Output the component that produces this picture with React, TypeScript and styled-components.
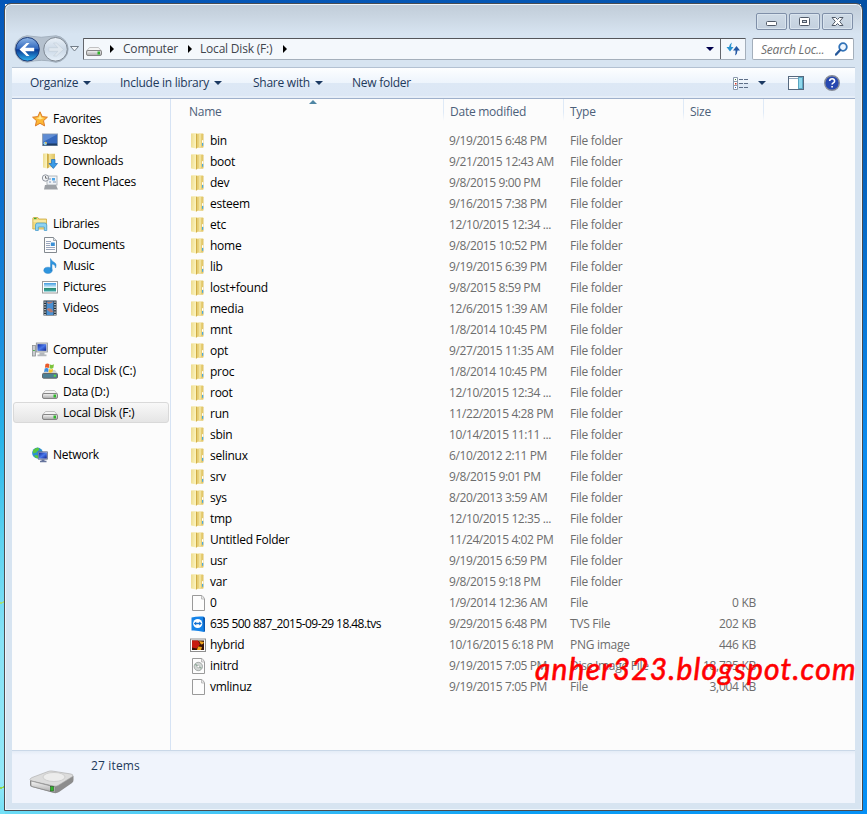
import React from 'react';
import styled, { createGlobalStyle, css } from 'styled-components';

const Global = createGlobalStyle`
  *{box-sizing:border-box}
  html,body{margin:0;padding:0;overflow:hidden}
  body{font-family:"Open Sans","Noto Sans",sans-serif;font-size:12px;color:#000;}
`;

const Desktop = styled.div`
  position:relative;width:867px;height:814px;padding:3px 4px 3px 4px;overflow:hidden;
  background:
    linear-gradient(90deg,#0456b8,#0557b4 60%,#0450a4) 0 0/867px 4px no-repeat,
    linear-gradient(180deg,#0450a4 0,#0667c4 200px,#0b8cf0 450px,#0590f6 814px) 100% 0/6px 814px no-repeat,
    linear-gradient(170deg,transparent 45%,#8fd84a 45%,#8fd84a 65%,transparent 65%) 0 783px/5px 8px no-repeat,
    linear-gradient(170deg,transparent 45%,#a4e07a 45%,#a4e07a 65%,transparent 65%) 0 598px/5px 8px no-repeat,
    linear-gradient(180deg,#0456b8 0,#0a6fce 200px,#1a90e0 340px,#28b4ea 440px,#5cd2f0 540px,#86e2f6 640px,#92e8f8 780px,#74e0f6 814px) 0 0/5px 814px no-repeat,
    linear-gradient(90deg,#6cdcf5,#45c6f6 25%,#0ba0f5 60%,#0590f6) 0 100%/867px 5px no-repeat;
`;
const Window = styled.div`
  display:flex;flex-direction:column;width:859px;height:808px;padding:0 7px 7px 7px;
  border:1px solid #4a4d52;border-radius:7px 7px 0 0;
  box-shadow:inset 0 0 0 1px #eef5fb;
  background:linear-gradient(180deg,#c0ccd8 0,#c9d5e1 12px,#d7e4f1 30px,#d7e4f1 100%);
`;
const TitleBar = styled.div`
  display:flex;justify-content:flex-end;gap:2px;height:34px;padding:9px 2px 0 0;flex:none;
`;
const Caption = styled.div`
  width:31px;height:17px;border:1px solid #7f8fa8;border-radius:2px;display:flex;align-items:center;justify-content:center;
  background:linear-gradient(#cedae6,#c3d0de);box-shadow:inset 0 0 0 1px #d9e4ee;
`;
const NavBar = styled.div`display:flex;height:29px;flex:none;`;
const NavButtons = styled.div`width:71px;height:29px;flex:none;svg{display:block;}`;
const Address = styled.div`
  display:flex;align-items:center;width:663px;height:22px;border:1px solid #a4afbb;border-top-color:#54565b;border-left-color:#63666c;
  border-radius:1px;background:#f4f8fc;color:#3f454d;margin-right:6px;flex:none;
  svg,i{flex:none;}
`;
const Crumb = styled.span<{ $w: number }>`width:${p => p.$w}px;line-height:20px;letter-spacing:-.2px;white-space:nowrap;`;
const Tri = styled.i<{ $l: number; $r: number }>`
  width:0;height:0;border:4px solid transparent;border-left:4px solid #000;border-right:0;
  margin-left:${p => p.$l}px;margin-right:${p => p.$r}px;
`;
const Down = styled.i<{ $c?: string; $l?: string }>`
  display:inline-block;width:0;height:0;border:4px solid transparent;border-top:4px solid ${p => p.$c || '#1c3a63'};border-bottom:0;margin-left:${p => p.$l || 0};
`;
const Refresh = styled.div`
  display:flex;align-items:center;justify-content:center;width:25px;height:20px;border-left:1px solid #63666c;margin-left:6px;flex:none;
`;
const Search = styled.div`
  display:flex;align-items:center;justify-content:space-between;width:102px;height:22px;border:1px solid #a4afbb;border-top-color:#6c7078;border-radius:2px;
  background:#fff;padding:0 5px 0 8px;color:#6d6d6d;font-style:italic;letter-spacing:-.2px;flex:none;
`;
const Client = styled.div`display:flex;flex-direction:column;flex:1;min-height:0;width:843px;`;
const Toolbar = styled.div`
  display:flex;align-items:center;height:32px;flex:none;border-top:1px solid #b3c1d2;border-bottom:1px solid #9fb0cb;
  background:linear-gradient(#fdfeff 0,#edf4fc 15px,#dde8f5 15px,#dce7f5 28px,#e6eef8 28px);color:#1e395b;padding-left:18px;
`;
const Tool = styled.div<{ $w: number }>`display:flex;align-items:center;gap:5px;width:${p => p.$w}px;letter-spacing:-.25px;white-space:nowrap;`;
const Label = styled.span`padding-bottom:1px;`;
const Body = styled.div`display:flex;height:651px;flex:none;background:#fcfcfc;`;
const Side = styled.div`width:159px;flex:none;border-right:1px solid #d6e3f4;padding:9px 1px 0;`;
const Gap = styled.div`height:21px;`;
const SideRow = styled.div<{ $child?: boolean; $sel?: boolean }>`
  display:flex;align-items:center;height:21px;padding-left:${p => (p.$child ? 28 : 18)}px;gap:5px;letter-spacing:-.27px;white-space:nowrap;
  border:1px solid transparent;
  ${p => p.$sel && css`border-color:#d9d9d9;border-radius:3px;background:linear-gradient(#f8f8f8,#e5e5e5);`}
  svg{flex:none;}
`;
const List = styled.div`width:684px;flex:none;`;
const Cells = css`display:grid;grid-template-columns:273px 120px 120px 80px;`;
const Head = styled.div`${Cells} position:relative;height:31px;color:#4c607a;`;
const HeadCell = styled.div<{ $first?: boolean }>`
  height:26px;line-height:25px;padding-left:${p => (p.$first ? 18 : 6)}px;letter-spacing:-.25px;
  background:linear-gradient(#dfeaf7,#dfeaf7 60%,#fcfcfc) 100% 0/1px 22px no-repeat;
`;
const SortMark = styled.div`position:absolute;left:138px;top:1px;width:0;height:0;border:4px solid transparent;border-top:0;border-bottom:4px solid #4f86a4;`;
const Row = styled.div`${Cells} height:21px;line-height:21px;white-space:nowrap;color:#6d6d6d;`;
const NameCell = styled.div<{ $tight?: boolean }>`display:flex;align-items:center;gap:3px;padding-left:20px;color:#000;letter-spacing:${p => (p.$tight ? -.56 : -.26)}px;svg{flex:none;}`;
const Cell = styled.div<{ $right?: boolean; $date?: boolean }>`padding-left:${p => (p.$date ? 5 : 6)}px;text-align:${p => (p.$right ? 'right' : 'left')};padding-right:${p => (p.$right ? 8 : 0)}px;letter-spacing:${p => (p.$date ? -.4 : -.28)}px;`;
const Details = styled.div`
  display:flex;flex:none;height:53px;border-top:1px solid #cad8e8;background:linear-gradient(#e4ecf6,#f0f4fc 4px);
  color:#1e395b;padding-left:17px;gap:17px;
`;
const Count = styled.div`padding-top:6px;line-height:17px;letter-spacing:.15px;`;
const Watermark = styled.div`
  position:absolute;left:535px;top:646px;font:italic 400 30px/44px Lato,"Open Sans",sans-serif;color:#f00;white-space:nowrap;letter-spacing:1.18px;-webkit-text-stroke:.6px #f00;
`;

const Defs = () => (
  <svg width="0" height="0" style={{ position: 'absolute' }}>
    <defs>
      <linearGradient id="back" x1="0" x2="1"><stop offset="0" stopColor="#f4e8a4" /><stop offset=".5" stopColor="#f3e398" /><stop offset="1" stopColor="#dfc262" /></linearGradient>
      <linearGradient id="flap" x1="0" x2="1" y1="0" y2=".2"><stop offset="0" stopColor="#ecda8c" /><stop offset="1" stopColor="#fbf3bc" /></linearGradient>
      <linearGradient id="blue" x1="0" x2="0" y1="0" y2="1"><stop offset="0" stopColor="#8fb6e6" /><stop offset=".48" stopColor="#2f66bd" /><stop offset=".52" stopColor="#0a3a94" /><stop offset="1" stopColor="#2fb4f0" /></linearGradient>
      <linearGradient id="pale" x1="0" x2="0" y1="0" y2="1"><stop offset="0" stopColor="#eaf1f8" /><stop offset=".5" stopColor="#cbd8e6" /><stop offset="1" stopColor="#e8f1fa" /></linearGradient>
      <linearGradient id="screen" x1="0" x2="1" y1="0" y2="1"><stop offset="0" stopColor="#10289c" /><stop offset=".5" stopColor="#4a78ea" /><stop offset="1" stopColor="#0a1f8c" /></linearGradient>
      <linearGradient id="metal" x1="0" x2="0" y1="0" y2="1"><stop offset="0" stopColor="#f6f6f6" /><stop offset="1" stopColor="#a9a9a9" /></linearGradient>
      <linearGradient id="sky" x1="0" x2="0" y1="0" y2="1"><stop offset="0" stopColor="#3f9be0" /><stop offset=".55" stopColor="#e4f7fb" /><stop offset=".6" stopColor="#2c8a6a" /><stop offset="1" stopColor="#3faab0" /></linearGradient>
    </defs>
  </svg>
);

const DiskShape = () => (
  <g>
    <path d="M3.500 6.500h9L15.500 10H.500z" fill="#f4f4f4" stroke="#b4b4b4" strokeWidth=".8" />
    <rect x=".5" y="9.500" width="15" height="5" rx="1.500" fill="url(#metal)" stroke="#858585" />
    <rect x="11.500" y="10.500" width="2.500" height="3" fill="#2fb52a" />
  </g>
);

const sheet = (
  <g>
    <path d="M1.500.5h9.500L13.500 3.500v12h-12z" fill="#fdfdfd" stroke="#9a9a9a" />
    <path d="M10.500.5v3.500h3" fill="#e8e8e8" stroke="#b0b0b0" strokeWidth=".8" />
  </g>
);

const art: Record<string, React.ReactNode> = {
  folder: (
    <g>
      <path d="M0 .5h11.700q.8 0 .8.8V14q0 .8-.8.8H6L0 14.300z" fill="url(#back)" />
      <path d="M0 .8l5-.3v15L0 14.200z" fill="url(#flap)" />
      <path d="M5 .5l1.500.8v13.200l-1.200 1.200-.3-.2z" fill="#d0ae46" />
      <path d="M6.500 1.300l2-.6v13l-2 1z" fill="#ead27a" />
      <path d="M8.500.7h1v13.200h-1z" fill="#faf1ba" />
      <rect x="11" y="9.800" width="1.200" height="3" fill="#4aa8e0" /><rect x="11" y="7.200" width="1.200" height="2.600" fill="#fff" />
    </g>
  ),
  star: <g><path d="M8 .8l2.200 4.800 5.200.6-3.900 3.500 1.100 5.200L8 12.300l-4.600 2.600 1.100-5.200L.6 6.200l5.200-.6z" fill="#fcb834" stroke="#dd7b26" strokeWidth="1" /><path d="M8 3l1.200 3.500L12 7l-4 1.500L4 7l2.800-.5z" fill="#ffe894" /></g>,
  desktop: <g><rect x=".5" y="2" width="15" height="11.500" fill="#3568bd" stroke="#8fa0b5" /><path d="M1 2.500h14L1 10z" fill="#7aa5e2" opacity=".6" /><rect x="1" y="11.500" width="14" height="2" fill="#1d3c66" /><circle cx="3.200" cy="11.500" r="1.800" fill="#8ed0f0" /><path d="M3.200 9.700a1.800 1.800 0 011.800 1.800H3.200z" fill="#f2b53c" /></g>,
  downloads: <g><path d="M1 .8h12v13.500H6L1 14z" fill="url(#back)" /><path d="M1 .8l4-.3v15l-4-1z" fill="url(#flap)" /><path d="M5 .5l1.800.8v13.500L5 15.500z" fill="#d0ae46" /><path d="M9.500 6.500h3.500v4h2.500l-4.200 5-4.300-5h2.500z" fill="#3a9be6" stroke="#1c69b8" strokeWidth=".7" /></g>,
  recent: <g><rect x="5" y="2" width="10" height="9" fill="#f0f3f6" stroke="#a1a8ae" strokeWidth=".8" /><path d="M3 11h11l2 4.500H2z" fill="#9da1a6" /><path d="M7 5h2M7 8h2M11 8h3" stroke="#7f96b5" /><rect x="10" y="4" width="3" height="2.500" fill="#4aa4e8" /><circle cx="3.500" cy="4" r="3.200" fill="#f2f4f6" stroke="#9297a0" /><path d="M3.500 2v2.200H5.500" stroke="#555" strokeWidth=".8" fill="none" /></g>,
  libraries: <g><path d="M.8 2.500q0-1 1-1h4l1 1.500h7.700v10H.8z" fill="#f2dc80" stroke="#cda943" strokeWidth=".8" /><path d="M1.500 5h12.500" stroke="#fff5c0" /><path d="M2 2.500h2.500" stroke="#3aa935" strokeWidth="1.300" /><path d="M3.500 14.500V9q0-2 2-2h7q2.300 0 2.300 2v5.500h-2.500v-3.500h-6v3.500z" fill="#8ed3f2" stroke="#3c95c8" strokeWidth=".7" /></g>,
  documents: <g><path d="M2.500.5h9l3 3v12h-12z" fill="#fdfdfd" stroke="#83898f" /><path d="M11.500.5v3h3" fill="#dfe4ea" stroke="#83898f" strokeWidth=".7" /><path d="M4 4.500h5M4 6.500h4M4 8.500h4M4 10.500h9M4 12.500h9" stroke="#8e9cb5" strokeWidth=".9" /><rect x="8.800" y="5.500" width="4" height="3.500" fill="#3a8fd6" /></g>,
  music: <g fill="#2f95de" stroke="#1c73bd" strokeWidth=".4"><ellipse cx="6" cy="12.300" rx="4.200" ry="3.100" /><path d="M8.500 12.500V.5q1 2.500 3.500 3.700 3.300 1.800 1.500 5.800.2-3.500-3.500-4v6.500z" /></g>,
  pictures: <g><rect x=".5" y="2.500" width="15" height="11.500" fill="#fff" stroke="#9b9b9b" /><rect x="2" y="4" width="12" height="8.500" fill="url(#sky)" /></g>,
  videos: <g><rect x="1.500" y=".5" width="13" height="15" fill="#26323c" /><rect x="4.500" y="1.300" width="7" height="13.700" fill="#4a91d4" /><path d="M4.500 9.500l2-1.500 3 1 2 3-3 .5zM4.500 2l2 2 3-1 2-1.500z" fill="#d87650" opacity=".75" /><path d="M3 1.500v14M13 1.500v14" stroke="#eef2f5" strokeWidth="1.300" strokeDasharray="1.200 1.300" /></g>,
  computer: <g><rect x=".5" y="3.500" width="3" height="10.500" fill="#c9cdd0" stroke="#8d9195" strokeWidth=".8" /><path d="M1.200 8.500h1.500" stroke="#2faa30" /><rect x="4.300" y="1" width="11.200" height="9" fill="#d9dcdf" stroke="#8d9195" strokeWidth=".8" /><rect x="5.500" y="2.200" width="8.800" height="6.600" fill="url(#screen)" /><path d="M7.500 10.500h5v2h2v1.700h-9v-1.700h2z" fill="#b4b8bc" /></g>,
  disk: <DiskShape />,
  cdisk: <g><path d="M3.500 7h9.500L16 11v3.500H0V11z" fill="#cfd3d5" /><rect x=".5" y="10.500" width="15" height="4.700" rx="1" fill="#4d7f94" stroke="#63686c" /><rect x="11.800" y="11.700" width="2" height="2" fill="#57e03a" /><path d="M3.500 1q2-1.200 4 .2L6.800 5q-2-1.100-3.900-.2z" fill="#ea5a2a" /><path d="M8 1.500q2 1 4-.2L11.300 5q-2 1.200-3.900.2z" fill="#7cc33c" /><path d="M2.700 5.500q2-.9 3.900.2L5.900 9q-2-1-3.800-.1z" fill="#3b8fe0" /><path d="M7.200 6q2 1 3.900-.2L10.500 9q-2 1.200-3.900.2z" fill="#f9c526" /></g>,
  network: <g><circle cx="5.500" cy="6" r="5.400" fill="#2b8fd2" /><path d="M1 3.500Q3 .5 6 .8q2 .8.500 2.600-1.500.4-2 2-1.500.6-3.400 1zM2 8.500l3-.5 1.500 1.500-1 1.900Q3 11 2 8.500z" fill="#5ac73e" /><rect x="6.300" y="4.800" width="9.200" height="7.400" fill="#c2c9d6" stroke="#5d6680" strokeWidth=".7" /><rect x="7" y="5.500" width="7.800" height="6" fill="url(#screen)" /><path d="M9.500 12.500h3v1.300h2v1.400H8v-1.400h1.500z" fill="#66749c" /></g>,
  sheet,
  tvs: <g><path d="M.500 1.500Q6 0 12 .5l2 1.500v13l-1 1Q6 14 .500 14.500z" fill="#1583e8" /><path d="M12 .5l2 1.500v13l-1 1z" fill="#0a55ac" /><circle cx="6.700" cy="7.500" r="4.600" fill="#fff" /><path d="M2.700 7.500l2.500-2v1.300h3V5.500l2.500 2-2.500 2V8.200h-3v1.300z" fill="#1170d0" /></g>,
  png: <g><rect x="-.5" y="2" width="15" height="12.500" fill="#fff" stroke="#8f8f8f" /><rect x="1" y="3.500" width="12" height="9.500" fill="#3a1408" /><path d="M1 3.500h6l2 4-3.500 4-4.500-1z" fill="#c81c10" /><path d="M8 4l5 1-1 2-2 .5zM7 9.500l4 .5-1 3H6z" fill="#f0a41c" /></g>,
  disc: <g>{sheet}<circle cx="7.300" cy="8.500" r="4.200" fill="#d3d7d5" stroke="#8d9290" strokeWidth=".7" /><path d="M7.300 8.500L4.300 6.300M7.300 8.500l3.200 1.700" stroke="#8aa894" strokeWidth="1.200" /><circle cx="7.300" cy="8.500" r="1.300" fill="#fff" stroke="#8d9290" strokeWidth=".5" /></g>,
};

const Icon = ({ name }: { name: string }) => <svg width="16" height="16" viewBox="0 0 16 16" overflow="visible">{art[name]}</svg>;

const places: ([string, string, boolean?] | null)[] = [
  ['star', 'Favorites'], ['desktop', 'Desktop', true], ['downloads', 'Downloads', true], ['recent', 'Recent Places', true], null,
  ['libraries', 'Libraries'], ['documents', 'Documents', true], ['music', 'Music', true], ['pictures', 'Pictures', true], ['videos', 'Videos', true], null,
  ['computer', 'Computer'], ['cdisk', 'Local Disk (C:)', true], ['disk', 'Data (D:)', true], ['disk', 'Local Disk (F:)', true], null,
  ['network', 'Network'],
];

const folders: [string, string][] = [
  ['bin', '9/19/2015 6:48 PM'], ['boot', '9/21/2015 12:43 AM'], ['dev', '9/8/2015 9:00 PM'], ['esteem', '9/16/2015 7:38 PM'],
  ['etc', '12/10/2015 12:34 ...'], ['home', '9/8/2015 10:52 PM'], ['lib', '9/19/2015 6:39 PM'], ['lost+found', '9/8/2015 8:59 PM'],
  ['media', '12/6/2015 1:39 AM'], ['mnt', '1/8/2014 10:45 PM'], ['opt', '9/27/2015 11:35 AM'], ['proc', '1/8/2014 10:45 PM'],
  ['root', '12/10/2015 12:34 ...'], ['run', '11/22/2015 4:28 PM'], ['sbin', '10/14/2015 11:11 ...'], ['selinux', '6/10/2012 2:11 PM'],
  ['srv', '9/8/2015 9:01 PM'], ['sys', '8/20/2013 3:59 AM'], ['tmp', '12/10/2015 12:35 ...'], ['Untitled Folder', '11/24/2015 4:02 PM'],
  ['usr', '9/19/2015 6:59 PM'], ['var', '9/8/2015 9:18 PM'],
];
const files: [string, string, string, string, string][] = [
  ...folders.map(([n, d]) => ['folder', n, d, 'File folder', ''] as [string, string, string, string, string]),
  ['sheet', '0', '1/9/2014 12:36 AM', 'File', '0 KB'],
  ['tvs', '635 500 887_2015-09-29 18.48.tvs', '9/29/2015 6:48 PM', 'TVS File', '202 KB'],
  ['png', 'hybrid', '10/16/2015 6:18 PM', 'PNG image', '446 KB'],
  ['disc', 'initrd', '9/19/2015 7:05 PM', 'Disc Image File', '18,735 KB'],
  ['sheet', 'vmlinuz', '9/19/2015 7:05 PM', 'File', '3,004 KB'],
];

export default function App() {
  return (
    <Desktop>
      <Global />
      <Defs />
      <Window>
        <TitleBar>
          <Caption><svg width="13" height="13" viewBox="0 0 13 13"><rect x="1.500" y="6.500" width="10" height="4" rx="1" fill="#fff" stroke="#505a68" /></svg></Caption>
          <Caption><svg width="13" height="13" viewBox="0 0 13 13"><rect x="1.500" y="2.500" width="10" height="8" rx="1" fill="#fff" stroke="#505a68" /><rect x="4.500" y="5.500" width="4" height="2" fill="#c8d4e0" stroke="#505a68" /></svg></Caption>
          <Caption><svg width="13" height="13" viewBox="0 0 13 13"><path d="M1 2.500h3.500l2 2 2-2H12L8.700 6.500 12 10.500H8.500l-2-2-2 2H1l3.300-4z" fill="#fff" stroke="#505a68" /></svg></Caption>
        </TitleBar>
        <NavBar>
          <NavButtons>
            <svg width="71" height="29" viewBox="12 38 71 29" overflow="visible">
              <path d="M27 35.800q14 3 29 0a13.300 13.300 0 010 26.500q-14-4-29 0a13.300 13.300 0 010-26.500z" fill="#b5c1ce" stroke="#a3b0be" />
              <circle cx="27.500" cy="49.300" r="11.800" fill="url(#blue)" stroke="#1c3a78" />
              <path d="M19.500 49.500l7-6.500h3l-4.300 4.700h9v3.600h-9l4.300 4.700h-3z" fill="#fff" />
              <circle cx="55.500" cy="49.300" r="11.800" fill="url(#pale)" stroke="#7d8792" />
              <path d="M63.500 49.500l-7-6.500h-3l4.300 4.700h-9v3.600h9l-4.300 4.700h3z" fill="#dfe7ef" stroke="#bdc9d5" strokeWidth=".5" />
              <path d="M70.500 46.500h8l-4 4.500z" fill="#f0f4f8" stroke="#737d88" />
            </svg>
          </NavButtons>
          <Address>
            <svg width="18" height="16" viewBox="-2 0 18 16"><DiskShape /></svg>
            <Tri $l={8} $r={9} /><Crumb $w={54}>Computer</Crumb>
            <Tri $l={11} $r={8} /><Crumb $w={73}>Local Disk (F:)</Crumb>
            <Tri $l={10} $r={0} />
            <Down $c="#00004c" $l="auto" />
            <Refresh>
              <svg width="15" height="14" viewBox="0 0 15 14"><path d="M6 .5Q3.500 1.500 3 5H.5L4 9.500 7.500 5H5.200Q5 2.500 6 .5z" fill="#2a93cf" /><path d="M9 13.500q2.500-1.500 2.500-5H14L10.500 4 7 8.500h2.500q.3 3-.5 5z" fill="#2558a4" /></svg>
            </Refresh>
          </Address>
          <Search>
            <span>Search Loc...</span>
            <svg width="13" height="14" viewBox="0 0 13 14"><circle cx="8" cy="5" r="3.800" fill="#eef6ff" stroke="#3273b8" strokeWidth="1.800" /><path d="M5.200 8L1 12.500" stroke="#27599b" strokeWidth="2.400" strokeLinecap="round" /></svg>
          </Search>
        </NavBar>
        <Client>
          <Toolbar>
            <Tool $w={90}><Label>Organize</Label><Down /></Tool>
            <Tool $w={133}><Label>Include in library</Label><Down /></Tool>
            <Tool $w={99}><Label>Share with</Label><Down /></Tool>
            <Tool $w={381}><Label>New folder</Label></Tool>
            <Tool $w={55}>
              <svg width="15" height="13" viewBox="0 0 15 13"><path d="M.5.5h4v12h-4zM.5 4.500h4M.5 8.500h4" fill="#fff" stroke="#8c9aad" /><path d="M6 2.500h4m1 0h4M6 6.500h4m1 0h4M6 10.500h4m1 0h4" stroke="#5e6f88" /><rect x="2" y="2" width="1" height="1" fill="#3c7a3c" /><rect x="2" y="6" width="1.500" height="1.500" fill="#d03020" /><rect x="2" y="10" width="1" height="1" fill="#3060c0" /></svg>
              <Down $l="5px" />
            </Tool>
            <Tool $w={36}><svg width="16" height="14" viewBox="0 0 16 14"><rect x=".5" y=".5" width="15" height="13" fill="#fff" stroke="#56697f" /><path d="M1 2.500h9" stroke="#8fa3b8" /><rect x="10.500" y="1.500" width="4" height="11" fill="#8fd8ec" stroke="#5aa5c0" /></svg></Tool>
            <svg width="16" height="16" viewBox="0 0 16 16"><circle cx="8" cy="8" r="7.300" fill="#2748b0" stroke="#868c98" strokeWidth="1.400" /><path d="M5.600 6q.2-2.300 2.500-2.300T10.600 6q0 1.200-1.300 1.900-1.200.7-1.200 1.700M8.100 11v1.600" stroke="#fff" strokeWidth="1.600" fill="none" /></svg>
          </Toolbar>
          <Body>
            <Side>
              {places.map((p, i) => p ? <SideRow key={i} $child={p[2]} $sel={p[1] === 'Local Disk (F:)'}><Icon name={p[0]} />{p[1]}</SideRow> : <Gap key={i} />)}
            </Side>
            <List>
              <Head>
                <HeadCell $first>Name</HeadCell><HeadCell>Date modified</HeadCell><HeadCell>Type</HeadCell><HeadCell>Size</HeadCell>
                <SortMark />
              </Head>
              {files.map(f => (
                <Row key={f[1]}>
                  <NameCell $tight={f[1].length > 20}><Icon name={f[0]} />{f[1]}</NameCell>
                  <Cell $date>{f[2]}</Cell><Cell>{f[3]}</Cell><Cell $right>{f[4]}</Cell>
                </Row>
              ))}
            </List>
          </Body>
          <Details>
            <svg width="45" height="53" viewBox="0 0 45 53">
              <path d="M1 29v5q0 1.500 2 2l22 6q3 .5 5-1l13-9q1.500-1 1.500-3v-4z" fill="#8c8c8c" />
              <path d="M1 28.500q0-1 2-2L19 20.500q2-.8 4-.5l19 3q3 .6 1.500 2.500L29 34.500q-2 1-4 .6L3 30q-2-.5-2-1.500z" fill="#dcdcdc" stroke="#a8a8a8" strokeWidth=".6" />
              <path d="M2 30l24 6v5.500L3 35.500q-1-.3-1-1.500z" fill="url(#metal)" stroke="#858585" strokeWidth=".6" />
              <ellipse cx="25" cy="26" rx="11" ry="4.500" fill="#ececec" stroke="#c4c4c4" strokeWidth=".7" />
              <rect x="21.500" y="35.500" width="3" height="4.500" fill="#2fb52a" stroke="#255a20" strokeWidth=".6" />
            </svg>
            <Count>27 items</Count>
          </Details>
        </Client>
      </Window>
      <Watermark>anher323.blogspot.com</Watermark>
    </Desktop>
  );
}
